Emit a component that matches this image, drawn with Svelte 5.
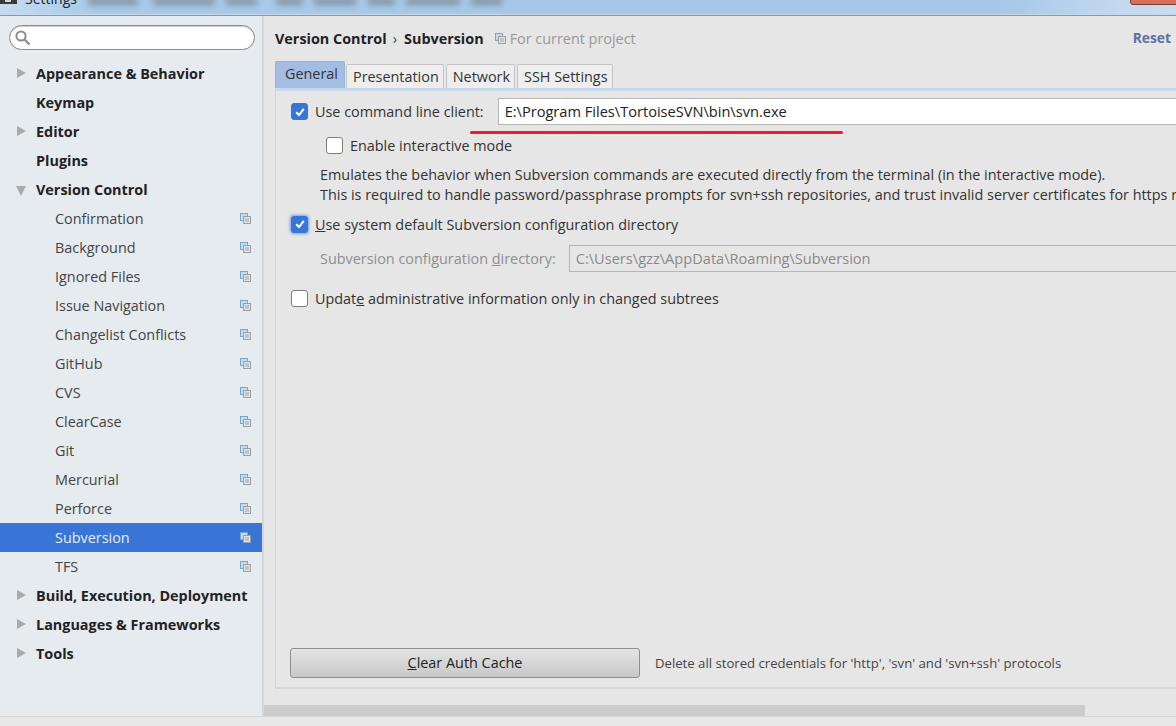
<script>
	const tree = [
		{ label: 'Appearance & Behavior', arrow: 'right' },
		{ label: 'Keymap' },
		{ label: 'Editor', arrow: 'right' },
		{ label: 'Plugins' },
		{ label: 'Version Control', arrow: 'down' },
		{ label: 'Confirmation', child: true },
		{ label: 'Background', child: true },
		{ label: 'Ignored Files', child: true },
		{ label: 'Issue Navigation', child: true },
		{ label: 'Changelist Conflicts', child: true },
		{ label: 'GitHub', child: true },
		{ label: 'CVS', child: true },
		{ label: 'ClearCase', child: true },
		{ label: 'Git', child: true },
		{ label: 'Mercurial', child: true },
		{ label: 'Perforce', child: true },
		{ label: 'Subversion', child: true, selected: true },
		{ label: 'TFS', child: true },
		{ label: 'Build, Execution, Deployment', arrow: 'right' },
		{ label: 'Languages & Frameworks', arrow: 'right' },
		{ label: 'Tools', arrow: 'right' }
	];

	const tabs = ['General', 'Presentation', 'Network', 'SSH Settings'];

	//blurred-out menu text in the title bar: [left, width]
	const smudges = [[88, 50], [153, 62], [226, 31], [276, 27], [314, 42], [368, 27], [406, 54], [471, 31]];
</script>

{#snippet projectIcon()}
	<svg class="project-icon" width="11" height="11" viewBox="0 0 11 11">
		<rect x="0.5" y="0.5" width="7" height="7" fill="#c4dcee" stroke="#74a8cf" />
		<rect x="3.5" y="3.5" width="7" height="7" fill="#dfe3e6" stroke="#9aa0a5" />
		<path d="M5 6h4M5 8h4" stroke="#a2a7ab" />
	</svg>
{/snippet}

{#snippet check(on, focus)}
	<span class="check" class:on class:focus>
		{#if on}
			<svg width="12" height="12" viewBox="0 0 12 12">
				<path d="M2.2 6.2 L5 9 L9.8 2.8" fill="none" stroke="#fff" stroke-width="2" />
			</svg>
		{/if}
	</span>
{/snippet}

<div class="window">
	<div class="titlebar">
		<svg class="app-icon" width="17" height="12" viewBox="0 0 17 12">
			<rect width="17" height="5" y="0" fill="#3a3a3a" />
			<rect x="5" y="0" width="6" height="3" fill="#d5d5d5" />
		</svg>
		<span class="title">Settings</span>
		{#each smudges as [left, width]}
			<span class="smudge" style="left: {left}px; width: {width}px"></span>
		{/each}
		<span class="close"></span>
	</div>

	<div class="main">
		<aside class="sidebar">
			<div class="search">
				<svg width="18" height="18" viewBox="0 0 18 18">
					<circle cx="7" cy="7" r="4.6" fill="none" stroke="#8d8d8d" stroke-width="2" />
					<path d="M10.5 10.5 L15.5 15.5" stroke="#8d8d8d" stroke-width="2.4" />
				</svg>
			</div>
			<ul class="tree">
				{#each tree as item}
					<li class:child={item.child} class:selected={item.selected}>
						{#if item.arrow === 'right'}
							<span class="arrow right"></span>
						{:else if item.arrow === 'down'}
							<span class="arrow down"></span>
						{/if}
						<span class="label">{item.label}</span>
						{#if item.child}
							{@render projectIcon()}
						{/if}
					</li>
				{/each}
			</ul>
		</aside>

		<section class="content">
			<div class="scroll-area">
				<header class="crumbs">
					<b>Version Control</b>
					<span class="sep">›</span>
					<b>Subversion</b>
					{@render projectIcon()}
					<span class="scope">For current project</span>
					<span class="reset">Reset</span>
				</header>

				<div class="tabs">
					{#each tabs as tab, i}
						<span class="tab" class:active={i === 0}>{tab}</span>
					{/each}
				</div>

				<div class="panel">
					<div class="row cmd">
						{@render check(true, false)}
						<span>Use command line client:</span>
						<div class="field">E:\Program Files\TortoiseSVN\bin\svn.exe</div>
					</div>
					<div class="row interactive">
						{@render check(false, false)}
						<span>Enable interactive mode</span>
					</div>
					<p class="note">
						Emulates the behavior when Subversion commands are executed directly from the terminal (in the interactive mode).<br />
						This is required to handle password/passphrase prompts for svn+ssh repositories, and trust invalid server certificates for https repositories.
					</p>
					<div class="row sysdefault">
						{@render check(true, true)}
						<span><u>U</u>se system default Subversion configuration directory</span>
					</div>
					<div class="row confdir">
						<span>Subversion configuration <u>d</u>irectory:</span>
						<div class="field disabled">C:\Users\gzz\AppData\Roaming\Subversion</div>
					</div>
					<div class="row update">
						{@render check(false, false)}
						<span>Updat<u>e</u> administrative information only in changed subtrees</span>
					</div>
					<div class="bottom">
						<button><u>C</u>lear Auth Cache</button>
						<span class="hint">Delete all stored credentials for 'http', 'svn' and 'svn+ssh' protocols</span>
					</div>
				</div>
				<div class="redline"></div>
			</div>
			<div class="hscroll"><div class="thumb"></div></div>
		</section>
	</div>
	<div class="footer"></div>
</div>

<style>
	:global(body) {
		margin: 0;
		background: #e8e8e8;
	}

	.window {
		width: 1176px;
		height: 726px;
		display: flex;
		flex-direction: column;
		overflow: hidden;
		font-family: 'Open Sans', 'Noto Sans', sans-serif;
		font-size: 14.4px;
		color: #333;
	}

	.titlebar {
		position: relative;
		height: 14px;
		flex: none;
		overflow: hidden;
		background: linear-gradient(90deg, #c4dcf0 0%, #a9cae8 8%, #a6c8e6 40%, #a6c7e6 85%, #c4d8ef 95%, #c8dcef 100%);
		border-bottom: 1px solid #c4dbf0;
	}

	.app-icon {
		position: absolute;
		left: 0;
		top: -1px;
	}

	.title {
		position: absolute;
		left: 25px;
		top: -11px;
		font-size: 14px;
		color: #222;
	}

	.smudge {
		position: absolute;
		top: -2px;
		height: 7px;
		background: #74808c;
		filter: blur(3px);
		opacity: 0.75;
	}

	.close {
		position: absolute;
		left: 1130px;
		top: -6px;
		width: 46px;
		height: 9px;
		background: #d2705c;
		border: 1px solid #7d3a30;
		border-radius: 3px;
	}

	.main {
		flex: 1;
		display: flex;
		min-height: 0;
		border-top: 1px solid #8e979f;
	}

	.sidebar {
		width: 262px;
		flex: none;
		background: #e6ebf0;
		border-right: 2px solid #d6d6d6;
		padding-top: 9px;
		box-sizing: content-box;
	}

	.search {
		height: 23px;
		margin-left: 9px;
		background: #fff;
		border: 1px solid #8a8a8a;
		border-radius: 13px;
		display: flex;
		align-items: center;
		padding-left: 4px;
		box-sizing: content-box;
		width: 240px;
		box-shadow: inset 0 1px 1px #ccc;
	}

	.tree {
		list-style: none;
		margin: 9px 0 0;
		padding: 0;
	}

	.tree li {
		position: relative;
		height: 29px;
		display: flex;
		align-items: center;
		padding-left: 36px;
		font-weight: 700;
		font-size: 14.4px;
		color: #222;
	}

	.tree li.child {
		padding-left: 55px;
		font-weight: 400;
		color: #444;
	}

	.tree li.selected {
		background: #3875d7;
		color: #e6eefb;
	}

	.label {
		flex: 1;
		white-space: nowrap;
	}

	.tree .project-icon {
		margin-right: 11px;
	}

	.arrow {
		position: absolute;
		width: 0;
		height: 0;
	}

	.arrow.right {
		left: 17px;
		top: 9px;
		border-top: 5px solid transparent;
		border-bottom: 5px solid transparent;
		border-left: 9px solid #aaa;
	}

	.arrow.down {
		left: 16px;
		top: 11px;
		border-left: 5.5px solid transparent;
		border-right: 5.5px solid transparent;
		border-top: 10px solid #aaa;
	}

	.content {
		flex: 1;
		min-width: 0;
		display: flex;
		flex-direction: column;
		background: #e6e6e6;
	}

	.scroll-area {
		position: relative;
		flex: 1;
		min-height: 0;
		padding-left: 11px;
		overflow: hidden;
	}

	.crumbs {
		height: 45px;
		display: flex;
		align-items: center;
		gap: 5px;
		color: #222;
		padding-bottom: 1px;
		box-sizing: border-box;
	}

	.crumbs .sep {
		color: #444;
		margin: 0 2px 0 1px;
	}

	.crumbs .project-icon {
		margin-left: 6px;
	}

	.scope {
		color: #999;
		margin-left: -1px;
	}

	.reset {
		position: absolute;
		right: 5px;
		top: 12px;
		font-size: 13.8px;
		font-weight: 700;
		color: #5b70a8;
	}

	.tabs {
		display: flex;
		height: 27px;
		gap: 2px;
		align-items: flex-end;
	}

	.tab {
		height: 24px;
		padding: 0 4px 0 6px;
		line-height: 23px;
		box-sizing: border-box;
		background: #eee;
		border: 1px solid #c4c4c4;
		border-bottom: 0;
		border-radius: 2px 2px 0 0;
		color: #333;
	}

	.tab.active {
		height: 27px;
		padding: 0 6px 0 9px;
		margin-right: -1px;
		line-height: 24px;
		background: #a3bde3;
		border-color: #9cb3d6;
	}

	.panel {
		height: 601px;
		width: 1000px;
		box-sizing: border-box;
		border-left: 1px solid #d4d4d4;
		border-bottom: 2px solid #d8d8d8;
		border-top: 3px solid #c8d9ec;
		position: relative;
		display: flex;
		flex-direction: column;
	}

	.row {
		display: flex;
		align-items: center;
		white-space: nowrap;
	}

	.check {
		flex: none;
		width: 15px;
		height: 15px;
		background: #fff;
		border: 1px solid #7d7d7d;
		border-radius: 3px;
		display: inline-flex;
		align-items: center;
		justify-content: center;
		box-sizing: content-box;
	}

	.check.on {
		background: #3875d7;
		border-color: #3875d7;
	}

	.check.focus {
		box-shadow: 0 0 3px 1px #6fa3e6;
	}

	.cmd {
		padding: 7px 0 0 15px;
		gap: 7px;
		height: 27px;
	}

	.field {
		margin-left: 7px;
		width: 800px;
		height: 27px;
		line-height: 25px;
		box-sizing: border-box;
		background: #fff;
		border: 1px solid #b5b5b5;
		padding-left: 6px;
		font-size: 14.6px;
		color: #222;
	}

	.field.disabled {
		margin-left: 13px;
		background: #e6e6e6;
		color: #8a8a8a;
		border-color: #b5b5b5;
	}

	.interactive {
		margin-top: 8px;
		padding-left: 50px;
		gap: 7px;
		height: 24px;
	}

	.note {
		margin: 8px 0 0 44px;
		line-height: 20px;
		white-space: nowrap;
		color: #333;
	}

	.sysdefault {
		margin-top: 7px;
		padding-left: 15px;
		gap: 7px;
		height: 24px;
	}

	.confdir {
		margin-top: 9px;
		padding-left: 44px;
		color: #8f8f8f;
	}

	.update {
		margin-top: 14px;
		padding-left: 15px;
		gap: 7px;
		height: 24px;
	}

	.bottom {
		position: absolute;
		left: 14px;
		bottom: 9px;
		display: flex;
		align-items: center;
		gap: 15px;
	}

	button {
		width: 350px;
		height: 30px;
		font: inherit;
		line-height: 27px;
		color: #222;
		background: linear-gradient(#e4e4e4, #c8c8c8);
		border: 1px solid #8f8f8f;
		border-radius: 3px;
		padding: 0 0 2px;
	}

	.hint {
		font-size: 13.15px;
		color: #444;
	}

	.redline {
		position: absolute;
		left: 206px;
		top: 115px;
		width: 373px;
		height: 3px;
		border-radius: 2px;
		background: #ec1c34;
	}

	.hscroll {
		flex: none;
		height: 11px;
	}

	.thumb {
		width: 821px;
		height: 100%;
		background: #cccccc;
	}

	.footer {
		flex: none;
		height: 10px;
		background: #e8e8e8;
		border-top: 1px solid #d4d4d4;
		box-sizing: border-box;
	}
</style>
